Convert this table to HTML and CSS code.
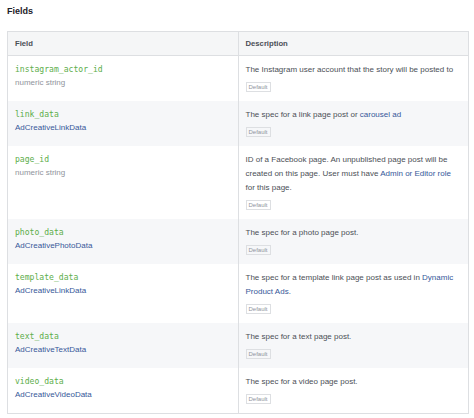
FILE: index.html
```html
<!DOCTYPE html>
<html>
<head>
<meta charset="utf-8">
<link rel="stylesheet" href="styles.css">
</head>
<body>
<div class="page">
  <h2 class="title">Fields</h2>
  <table class="fields">
    <thead>
      <tr><th>Field</th><th>Description</th></tr>
    </thead>
    <tbody>
      <tr>
        <td><code class="name">instagram_actor_id</code><span class="type">numeric string</span></td>
        <td><p class="desc">The Instagram user account that the story will be posted to</p><span class="badge">Default</span></td>
      </tr>
      <tr class="alt">
        <td><code class="name">link_data</code><a class="type link">AdCreativeLinkData</a></td>
        <td><p class="desc">The spec for a link page post or <a class="link">carousel ad</a></p><span class="badge">Default</span></td>
      </tr>
      <tr>
        <td><code class="name">page_id</code><span class="type">numeric string</span></td>
        <td><p class="desc">ID of a Facebook page. An unpublished page post will be created on this page. User must have <a class="link">Admin or Editor role</a> for this page.</p><span class="badge">Default</span></td>
      </tr>
      <tr class="alt">
        <td><code class="name">photo_data</code><a class="type link">AdCreativePhotoData</a></td>
        <td><p class="desc">The spec for a photo page post.</p><span class="badge">Default</span></td>
      </tr>
      <tr>
        <td><code class="name">template_data</code><a class="type link">AdCreativeLinkData</a></td>
        <td><p class="desc">The spec for a template link page post as used in <a class="link">Dynamic Product Ads</a>.</p><span class="badge">Default</span></td>
      </tr>
      <tr class="alt">
        <td><code class="name">text_data</code><a class="type link">AdCreativeTextData</a></td>
        <td><p class="desc">The spec for a text page post.</p><span class="badge">Default</span></td>
      </tr>
      <tr>
        <td><code class="name">video_data</code><a class="type link">AdCreativeVideoData</a></td>
        <td><p class="desc">The spec for a video page post.</p><span class="badge">Default</span></td>
      </tr>
    </tbody>
  </table>
</div>
</body>
</html>
```

FILE: styles.css
```css
html, body {
  margin: 0;
  padding: 0;
  background: #ffffff;
}

.page {
  padding: 5px 5px 0 7px;
  font-family: "Liberation Sans", Arial, sans-serif;
  color: #4b4f56;
}

.title {
  margin: 0 0 14px 0;
  font-size: 9px;
  line-height: 12px;
  font-weight: bold;
  color: #1d2129;
}

.fields {
  width: 462px;
  border-collapse: collapse;
  table-layout: fixed;
  border: 1px solid #dddfe2;
}

.fields th {
  background: #f5f6f7;
  text-align: left;
  font-size: 7.7px;
  font-weight: bold;
  color: #4b4f56;
  line-height: 11px;
  padding: 6px 7px 6px 7px;
  height: 11px;
  border-bottom: 1px solid #dddfe2;
  border-left: 1px solid #dddfe2;
}

.fields th:first-child,
.fields td:first-child {
  border-left: none;
}

.fields td {
  vertical-align: top;
  padding: 7px 7px 9px 7px;
  border-left: 1px solid #dddfe2;
  font-size: 8px;
  line-height: 14px;
}

.fields tr.alt td {
  background: #f6f7f9;
}

.name {
  display: block;
  font-family: "DejaVu Sans Mono", monospace;
  font-size: 8.1px;
  line-height: 13px;
  color: #5dae4b;
}

.type {
  display: block;
  font-size: 8px;
  line-height: 14px;
  color: #90949c;
}

.link {
  color: #365899;
  text-decoration: none;
}

.type.link {
  color: #365899;
}

.desc {
  margin: 0 0 5px 0;
  font-size: 8px;
  line-height: 14px;
  color: #4b4f56;
}

.badge {
  display: block;
  width: max-content;
  border: 1px solid #dddfe2;
  padding: 0 2px;
  font-size: 6px;
  line-height: 8px;
  color: #90949c;
}
```
